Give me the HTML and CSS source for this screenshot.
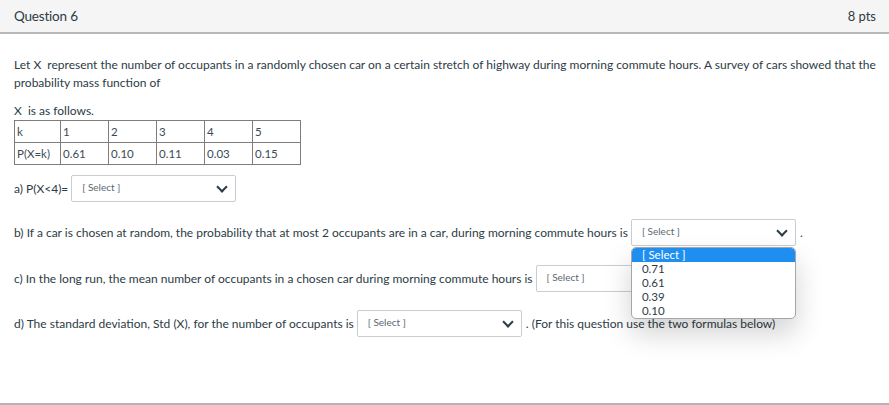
FILE: index.html
```html
<!DOCTYPE html>
<html lang="en">
<head>
    <meta charset="UTF-8">
    <title>Question 6</title>
    <link rel="stylesheet" href="styles.css">
</head>
<body>
    <div class="question">
        <header class="header">
            <span class="title">Question 6</span>
            <span class="points">8 pts</span>
        </header>

        <div class="content">
            <p class="text">Let X&nbsp; represent the number of occupants in a randomly chosen car on a certain stretch of highway during morning commute hours. A survey of cars showed that the probability mass function of</p>
            <p class="text follows">X&nbsp; is as follows.</p>

            <table class="pmf">
                <tr>
                    <td class="first">k</td><td>1</td><td>2</td><td>3</td><td>4</td><td>5</td>
                </tr>
                <tr>
                    <td class="first">P(X=k)</td><td>0.61</td><td>0.10</td><td>0.11</td><td>0.03</td><td>0.15</td>
                </tr>
            </table>

            <div class="row row-a">
                a) P(X&lt;4)=
                <span class="select"><span class="value">[ Select ]</span><span class="chevron"></span></span>
            </div>

            <div class="row row-b">
                b) If a car is chosen at random, the probability that at most 2 occupants are in a car, during morning commute hours is
                <span class="select open">
                    <span class="value">[ Select ]</span><span class="chevron"></span>
                    <ul class="options">
                        <li class="active">[ Select ]</li>
                        <li>0.71</li>
                        <li>0.61</li>
                        <li>0.39</li>
                        <li>0.10</li>
                    </ul>
                </span><span class="dot">.</span>
            </div>

            <div class="row row-c">
                c) In the long run, the mean number of occupants in a chosen car during morning commute hours is
                <span class="select"><span class="value">[ Select ]</span><span class="chevron"></span></span>
            </div>

            <div class="row row-d">
                d) The standard deviation, Std (X), for the number of occupants is
                <span class="select"><span class="value">[ Select ]</span><span class="chevron"></span></span><span class="dot">. (For this question use the two formulas below)</span>
            </div>
        </div>
    </div>
</body>
</html>
```

FILE: styles.css
```css
body {
    margin: 0;
    font-family: Lato, "Open Sans", sans-serif;
    color: #2d3b45;
    background: #fff;
}

.question {
    height: 403px;
    border-bottom: 2px solid #b4b4b4;
}

.header {
    display: flex;
    justify-content: space-between;
    align-items: center;
    height: 32px;
    padding: 0 13px 0 14px;
    background: #f5f5f5;
    border-bottom: 2px solid #b9b9b9;
}

.title {
    font-size: 13.5px;
    color: #2d3b45;
    letter-spacing: -0.2px;
}

.points {
    font-size: 13px;
    color: #2d3b45;
}

.content {
    padding: 22px 4px 0 14px;
    font-size: 12px;
}

.text {
    margin: 0;
    line-height: 18px;
}

.follows {
    margin-top: 10px;
}

.pmf {
    border-collapse: collapse;
    margin-top: 0;
}

.pmf td {
    border: 1px solid #7d7d7d;
    height: 21px;
    width: 43px;
    padding: 0 2px;
    font-size: 11.5px;
    color: #3c4a54;
}

.pmf td.first {
    width: 41px;
}

.row {
    display: flex;
    align-items: center;
    white-space: nowrap;
}

.row-a {
    margin-top: 10px;
}

.row-b {
    margin-top: 17px;
}

.row-c {
    margin-top: 19px;
}

.row-d {
    margin-top: 18px;
}

.select {
    position: relative;
    display: inline-flex;
    align-items: center;
    justify-content: space-between;
    box-sizing: border-box;
    width: 165px;
    height: 27px;
    margin-left: 3px;
    padding: 0 9px 0 10px;
    border: 1px solid #c7cdd1;
    border-radius: 2px;
    background: #fff;
}

.value {
    font-size: 10px;
    color: #5b6870;
    margin-top: -4px;
}

.chevron {
    width: 6px;
    height: 6px;
    margin-top: -4px;
    border-right: 2px solid #2d3b45;
    border-bottom: 2px solid #2d3b45;
    transform: rotate(45deg);
}

.row-c .select .chevron {
    visibility: hidden;
}

.dot {
    margin-left: 4px;
}

.options {
    position: absolute;
    top: 27px;
    left: -1px;
    width: 165px;
    box-sizing: border-box;
    margin: 0;
    padding: 0;
    list-style: none;
    background: #fff;
    border: 1px solid #a6a6a6;
    border-radius: 5px;
    box-shadow: 0 14px 28px rgba(0, 0, 0, 0.18);
    z-index: 10;
    overflow: hidden;
}

.options li {
    font-size: 11.5px;
    line-height: 14px;
    height: 14px;
    padding-left: 10px;
    color: #2d3b45;
}

.options li.active {
    background: #1f8ef1;
    color: #fff;
    border-radius: 4px 4px 0 0;
}
```
